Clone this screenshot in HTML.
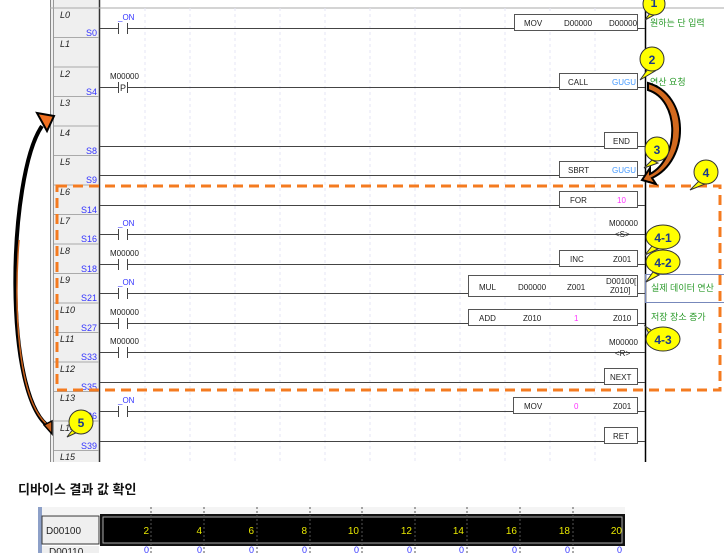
<!DOCTYPE html>
<html><head><meta charset="utf-8"><style>
body{margin:0;width:724px;height:553px;background:#fff;overflow:hidden;font-family:"Liberation Sans","Noto Sans CJK KR",sans-serif}
svg{position:absolute;left:0;top:0}
</style></head><body>
<svg width="724" height="553" viewBox="0 0 724 553" font-family="Liberation Sans, Noto Sans CJK KR, sans-serif">
<rect x="50" y="0" width="50" height="462" fill="#efefef"/>
<line x1="50.5" y1="0" x2="50.5" y2="462" stroke="#888" stroke-width="1"/>
<line x1="53.5" y1="0" x2="53.5" y2="462" stroke="#999" stroke-width="1"/>
<line x1="99.5" y1="0" x2="99.5" y2="462" stroke="#333" stroke-width="1.5"/>
<line x1="50" y1="8" x2="724" y2="8" stroke="#aaa"/>
<line x1="645.5" y1="8" x2="645.5" y2="462" stroke="#000" stroke-width="1.5"/>
<g stroke="#e4e4f4" stroke-dasharray="3,3">
<line x1="145" y1="8" x2="145" y2="462"/><line x1="190" y1="8" x2="190" y2="462"/><line x1="235" y1="8" x2="235" y2="462"/><line x1="280" y1="8" x2="280" y2="462"/><line x1="325" y1="8" x2="325" y2="462"/><line x1="370" y1="8" x2="370" y2="462"/><line x1="415" y1="8" x2="415" y2="462"/><line x1="460" y1="8" x2="460" y2="462"/><line x1="505" y1="8" x2="505" y2="462"/><line x1="550" y1="8" x2="550" y2="462"/><line x1="595" y1="8" x2="595" y2="462"/>
</g>
<g font-size="9" font-style="italic" fill="#222">
<g stroke="#aaa"><line x1="54" y1="37.5" x2="99" y2="37.5"/><line x1="54" y1="67" x2="99" y2="67"/><line x1="54" y1="96.5" x2="99" y2="96.5"/><line x1="54" y1="126" x2="99" y2="126"/><line x1="54" y1="155.5" x2="99" y2="155.5"/><line x1="54" y1="185" x2="99" y2="185"/><line x1="54" y1="214.5" x2="99" y2="214.5"/><line x1="54" y1="244" x2="99" y2="244"/><line x1="54" y1="273.5" x2="99" y2="273.5"/><line x1="54" y1="303" x2="99" y2="303"/><line x1="54" y1="332.5" x2="99" y2="332.5"/><line x1="54" y1="362" x2="99" y2="362"/><line x1="54" y1="391.5" x2="99" y2="391.5"/><line x1="54" y1="421" x2="99" y2="421"/><line x1="54" y1="450.5" x2="99" y2="450.5"/></g>
<text x="60" y="18">L0</text><text x="60" y="47">L1</text><text x="60" y="77">L2</text><text x="60" y="106">L3</text><text x="60" y="136">L4</text><text x="60" y="165">L5</text><text x="60" y="195">L6</text><text x="60" y="224">L7</text><text x="60" y="254">L8</text><text x="60" y="283">L9</text><text x="60" y="313">L10</text><text x="60" y="342">L11</text><text x="60" y="372">L12</text><text x="60" y="401">L13</text><text x="60" y="431">L14</text><text x="60" y="460">L15</text>
</g>
<g font-size="9" fill="#33f" text-anchor="end">
<text x="97" y="36">S0</text><text x="97" y="95">S4</text><text x="97" y="154">S8</text><text x="97" y="183">S9</text><text x="97" y="213">S14</text><text x="97" y="242">S16</text><text x="97" y="272">S18</text><text x="97" y="301">S21</text><text x="97" y="331">S27</text><text x="97" y="360">S33</text><text x="97" y="390">S35</text><text x="97" y="419">S36</text><text x="97" y="449">S39</text>
</g>
<g stroke="#444" stroke-width="1">
<line x1="100" y1="28.5" x2="514" y2="28.5"/><line x1="638" y1="28.5" x2="645" y2="28.5"/>
<line x1="100" y1="87.5" x2="559" y2="87.5"/><line x1="638" y1="87.5" x2="645" y2="87.5"/>
<line x1="100" y1="146.5" x2="604" y2="146.5"/><line x1="638" y1="146.5" x2="645" y2="146.5"/>
<line x1="100" y1="175.5" x2="559" y2="175.5"/><line x1="638" y1="175.5" x2="645" y2="175.5"/>
<line x1="100" y1="205.5" x2="559" y2="205.5"/><line x1="638" y1="205.5" x2="645" y2="205.5"/>
<line x1="100" y1="234.5" x2="645" y2="234.5"/>
<line x1="100" y1="264.5" x2="559" y2="264.5"/><line x1="638" y1="264.5" x2="645" y2="264.5"/>
<line x1="100" y1="293.5" x2="468" y2="293.5"/><line x1="638" y1="293.5" x2="645" y2="293.5"/>
<line x1="100" y1="323.5" x2="468" y2="323.5"/><line x1="638" y1="323.5" x2="645" y2="323.5"/>
<line x1="100" y1="352.5" x2="645" y2="352.5"/>
<line x1="100" y1="382.5" x2="604" y2="382.5"/><line x1="638" y1="382.5" x2="645" y2="382.5"/>
<line x1="100" y1="411.5" x2="513" y2="411.5"/><line x1="638" y1="411.5" x2="645" y2="411.5"/>
<line x1="100" y1="441.5" x2="604" y2="441.5"/><line x1="638" y1="441.5" x2="645" y2="441.5"/>
</g>
<g fill="#fff" stroke="#444">
<rect x="118" y="23" width="10" height="11" stroke="none"/><line x1="118.5" y1="23" x2="118.5" y2="34"/><line x1="127.5" y1="23" x2="127.5" y2="34"/>
<rect x="118" y="82" width="10" height="11" stroke="none"/><line x1="118.5" y1="82" x2="118.5" y2="93"/><line x1="127.5" y1="82" x2="127.5" y2="93"/>
<rect x="118" y="229" width="10" height="11" stroke="none"/><line x1="118.5" y1="229" x2="118.5" y2="240"/><line x1="127.5" y1="229" x2="127.5" y2="240"/>
<rect x="118" y="259" width="10" height="11" stroke="none"/><line x1="118.5" y1="259" x2="118.5" y2="270"/><line x1="127.5" y1="259" x2="127.5" y2="270"/>
<rect x="118" y="288" width="10" height="11" stroke="none"/><line x1="118.5" y1="288" x2="118.5" y2="299"/><line x1="127.5" y1="288" x2="127.5" y2="299"/>
<rect x="118" y="318" width="10" height="11" stroke="none"/><line x1="118.5" y1="318" x2="118.5" y2="329"/><line x1="127.5" y1="318" x2="127.5" y2="329"/>
<rect x="118" y="347" width="10" height="11" stroke="none"/><line x1="118.5" y1="347" x2="118.5" y2="358"/><line x1="127.5" y1="347" x2="127.5" y2="358"/>
<rect x="118" y="406" width="10" height="11" stroke="none"/><line x1="118.5" y1="406" x2="118.5" y2="417"/><line x1="127.5" y1="406" x2="127.5" y2="417"/>
</g>
<text x="120" y="91" font-size="9" fill="#222">P</text>
<g font-size="8">
<text x="118" y="20" fill="#33f">_ON</text>
<text x="110" y="79" fill="#222">M00000</text>
<text x="118" y="226" fill="#33f">_ON</text>
<text x="110" y="256" fill="#222">M00000</text>
<text x="118" y="285" fill="#33f">_ON</text>
<text x="110" y="315" fill="#222">M00000</text>
<text x="110" y="344" fill="#222">M00000</text>
<text x="118" y="403" fill="#33f">_ON</text>
<text x="609" y="226" fill="#222">M00000</text>
<text x="615" y="237" fill="#222">&lt;S&gt;</text>
<text x="609" y="345" fill="#222">M00000</text>
<text x="615" y="356" fill="#222">&lt;R&gt;</text>
</g>
<g fill="#fff" stroke="#555">
<rect x="514.5" y="14.5" width="123" height="16"/>
<rect x="559.5" y="73.5" width="78" height="16"/>
<rect x="604.5" y="132.5" width="33" height="16"/>
<rect x="559.5" y="161.5" width="78" height="16"/>
<rect x="559.5" y="191.5" width="78" height="16"/>
<rect x="559.5" y="250.5" width="78" height="16"/>
<rect x="468.5" y="275.5" width="169" height="21"/>
<rect x="468.5" y="309.5" width="169" height="16"/>
<rect x="604.5" y="368.5" width="33" height="16"/>
<rect x="513.5" y="397.5" width="124" height="16"/>
<rect x="604.5" y="427.5" width="33" height="16"/>
</g>
<g font-size="8" fill="#222">
<text x="524" y="26">MOV</text><text x="564" y="26">D00000</text><text x="609" y="26">D00000</text>
<text x="568" y="85">CALL</text><text x="612" y="85" fill="#49f">GUGU</text>
<text x="613" y="144">END</text>
<text x="568" y="173">SBRT</text><text x="612" y="173" fill="#49f">GUGU</text>
<text x="570" y="203">FOR</text><text x="617" y="203" fill="#f3f">10</text>
<text x="570" y="262">INC</text><text x="613" y="262">Z001</text>
<text x="479" y="290">MUL</text><text x="518" y="290">D00000</text><text x="567" y="290">Z001</text><text x="606" y="284">D00100[</text><text x="610" y="293">Z010]</text>
<text x="479" y="321">ADD</text><text x="523" y="321">Z010</text><text x="574" y="321" fill="#f3f">1</text><text x="613" y="321">Z010</text>
<text x="610" y="380">NEXT</text>
<text x="524" y="409">MOV</text><text x="574" y="409" fill="#f3f">0</text><text x="613" y="409">Z001</text>
<text x="613" y="439">RET</text>
</g>
<g font-size="9" fill="#2a9a2a">
<text x="650" y="26">원하는 단 입력</text>
<text x="650" y="85">연산 요청</text>
<text x="651" y="291">실제 데이터 연산</text>
<text x="651" y="320">저장 장소 증가</text>
</g>
<rect x="645.5" y="274.5" width="80" height="28" fill="none" stroke="#7788bb"/>
<g fill="none" stroke="#f47b20" stroke-width="3" stroke-dasharray="10,6">
<path d="M57 186 H720 V390 H57 Z"/>
</g>
<path d="M648 83 C690 95 690 160 652 178 L656 184 L642 180 L650 168 L650 174 C680 158 680 100 648 90 Z" fill="#d2691e" stroke="#000" stroke-width="2"/>
<!-- left arrow -->
<path d="M51 428 C2 400 8 175 42 126" fill="none" stroke="#000" stroke-width="4"/>
<path d="M49 426 C16 402 14 300 19 240" fill="none" stroke="#c8601c" stroke-width="1.5"/>
<path d="M52 434 L52 421 L44 425 Z" fill="#c8601c" stroke="#000" stroke-width="1.5"/>
<path d="M54 116 L37 113 L47 131 Z" fill="#f07020" stroke="#000" stroke-width="2"/>
<g fill="#ffff00" stroke="#333" stroke-width="1">
<path d="M645 20 L650 13 L656 14 Z"/><circle cx="654" cy="4" r="11"/>
<path d="M640 80 L648 69 L655 71 Z"/><circle cx="652" cy="59" r="12"/>
<path d="M644 168 L652 160 L658 163 Z"/><circle cx="657" cy="149" r="12"/>
<path d="M690 190 L700 180 L705 184 Z"/><circle cx="706" cy="172" r="12"/>
<path d="M645 255 L652 246 L658 249 Z"/><ellipse cx="663" cy="237" rx="17" ry="12"/>
<path d="M646 282 L653 272 L659 275 Z"/><ellipse cx="663" cy="262" rx="17" ry="12"/>
<path d="M645 326 L654 332 L650 336 Z"/><ellipse cx="663" cy="339" rx="17" ry="12"/>
<path d="M67 437 L74 428 L80 431 Z"/><circle cx="81" cy="422" r="12"/>
</g>
<g font-size="12" font-weight="bold" fill="#1a3a8a" text-anchor="middle">
<text x="654" y="7">1</text><text x="652" y="64">2</text><text x="657" y="154">3</text><text x="706" y="177">4</text>
<text x="663" y="242">4-1</text><text x="663" y="267">4-2</text><text x="663" y="344">4-3</text><text x="81" y="427">5</text>
</g>
<text x="18" y="494" font-size="13" font-weight="bold" fill="#111">디바이스 결과 값 확인</text>
<rect x="38" y="507" width="4" height="46" fill="#8da0c8"/>
<rect x="42" y="507" width="583" height="8" fill="#f4f4f4"/>
<rect x="42" y="516" width="57" height="28" fill="#efefef" stroke="#333"/>
<text x="46" y="534" font-size="10" fill="#222">D00100</text>
<rect x="100" y="514" width="525" height="32" fill="#111"/>
<rect x="103" y="517" width="519" height="26" fill="#000" stroke="#aaa"/>
<g stroke="#555" stroke-dasharray="2,2"><line x1="151" y1="507" x2="151" y2="553"/><line x1="204" y1="507" x2="204" y2="553"/><line x1="257" y1="507" x2="257" y2="553"/><line x1="310" y1="507" x2="310" y2="553"/><line x1="362" y1="507" x2="362" y2="553"/><line x1="415" y1="507" x2="415" y2="553"/><line x1="467" y1="507" x2="467" y2="553"/><line x1="520" y1="507" x2="520" y2="553"/><line x1="573" y1="507" x2="573" y2="553"/></g>
<g font-size="10" fill="#e8e800" text-anchor="end">
<text x="149" y="534">2</text><text x="202" y="534">4</text><text x="254" y="534">6</text><text x="307" y="534">8</text><text x="359" y="534">10</text><text x="412" y="534">12</text><text x="464" y="534">14</text><text x="517" y="534">16</text><text x="570" y="534">18</text><text x="622" y="534">20</text>
</g>
<rect x="42" y="546" width="57" height="8" fill="#efefef"/>
<text x="49" y="555" font-size="10" fill="#222">D00110</text>
<g font-size="9" fill="#33f" text-anchor="end"><text x="149" y="553">0</text><text x="202" y="553">0</text><text x="254" y="553">0</text><text x="307" y="553">0</text><text x="359" y="553">0</text><text x="412" y="553">0</text><text x="464" y="553">0</text><text x="517" y="553">0</text><text x="570" y="553">0</text><text x="622" y="553">0</text></g>
</svg>
</body></html>
